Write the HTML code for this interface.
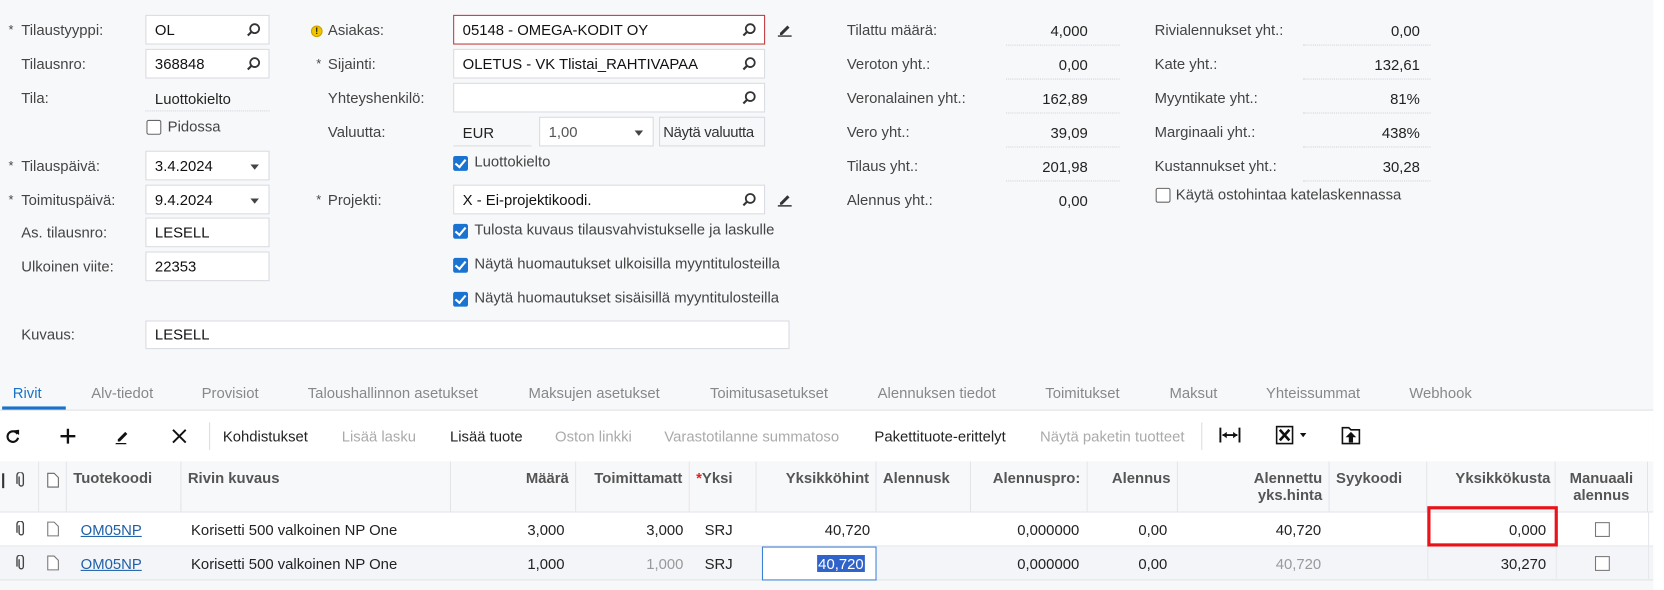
<!DOCTYPE html>
<html><head><meta charset="utf-8"><style>
*{box-sizing:border-box;margin:0;padding:0}
html,body{width:1664px;height:590px;overflow:hidden;background:#fff}
body{font-family:"Liberation Sans",Arial,sans-serif;font-size:14px;color:#222}
#w{position:absolute;left:0;top:0;width:1568px;height:556px;transform:scale(1.0612);transform-origin:0 0;background:#f7f8fa}
.a{position:absolute;white-space:nowrap}
.lbl{color:#444}
.st{color:#444;font-size:12px}
.in{position:absolute;height:28px;background:#fff;border:1px solid #d8dbe0;padding:0 8px;line-height:26px;color:#111}
.srch{position:absolute;right:7px;top:6px;width:14px;height:14px}
.dd{position:absolute;right:9px;top:12px;border-left:4px solid transparent;border-right:4px solid transparent;border-top:5px solid #444}
.cb{position:absolute;width:14px;height:14px;border-radius:2px;background:#1a73d0}
.cb:after{content:"";position:absolute;left:4px;top:1px;width:4px;height:8px;border:solid #fff;border-width:0 2px 2px 0;transform:rotate(40deg)}
.ucb{position:absolute;width:14px;height:14px;border:1px solid #666;border-radius:2px;background:#fff}
.ul{position:absolute;height:1px;border-bottom:1px dotted #d0d3d8}
.val{text-align:right}
.tab{position:absolute;top:362px;color:#888}
.tb{position:absolute;top:403px}
.g{color:#aaa}
.hd{position:absolute;top:435px;height:48px;border-right:1px solid #e2e4e8;border-bottom:1px solid #e2e4e8;background:#f7f8fa;padding:7px 6px;color:#555;font-weight:bold;line-height:16px}
.r{text-align:right}
.cell{position:absolute;height:16px;line-height:16px}
</style></head><body><div id="w">
<div class="a st" style="left:8px;top:21px">*</div><div class="a lbl" style="left:20px;top:20px">Tilaustyyppi:</div>
<div class="in" style="left:137px;top:14px;width:117px">OL<svg class="srch" viewBox="0 0 14 14"><circle cx="8" cy="6" r="4.2" fill="none" stroke="#333" stroke-width="1.7"/><path d="M5 9L1.5 12.5" stroke="#333" stroke-width="2"/></svg></div>
<div class="a lbl" style="left:20px;top:52px">Tilausnro:</div>
<div class="in" style="left:137px;top:46px;width:117px">368848<svg class="srch" viewBox="0 0 14 14"><circle cx="8" cy="6" r="4.2" fill="none" stroke="#333" stroke-width="1.7"/><path d="M5 9L1.5 12.5" stroke="#333" stroke-width="2"/></svg></div>
<div class="a lbl" style="left:20px;top:84px">Tila:</div>
<div class="a" style="left:146px;top:85px">Luottokielto</div><div class="ul" style="left:137px;top:104px;width:117px"></div>
<div class="ucb" style="left:138px;top:113px"></div><div class="a lbl" style="left:158px;top:111px">Pidossa</div>
<div class="a st" style="left:8px;top:149px">*</div><div class="a lbl" style="left:20px;top:148px">Tilauspäivä:</div>
<div class="in" style="left:137px;top:142px;width:117px">3.4.2024<span class="dd"></span></div>
<div class="a st" style="left:8px;top:181px">*</div><div class="a lbl" style="left:20px;top:180px">Toimituspäivä:</div>
<div class="in" style="left:137px;top:174px;width:117px">9.4.2024<span class="dd"></span></div>
<div class="a lbl" style="left:20px;top:211px">As. tilausnro:</div>
<div class="in" style="left:137px;top:205px;width:117px">LESELL</div>
<div class="a lbl" style="left:20px;top:243px">Ulkoinen viite:</div>
<div class="in" style="left:137px;top:237px;width:117px">22353</div>
<div class="a lbl" style="left:20px;top:307px">Kuvaus:</div>
<div class="in" style="left:137px;top:302px;width:607px;height:27px;line-height:25px">LESELL</div>
<div class="a" style="left:293px;top:24px;width:11px;height:11px;border-radius:50%;background:#f2c500;border:1px solid #c9a000;font-size:9px;font-weight:bold;text-align:center;line-height:9px">!</div>
<div class="a lbl" style="left:309px;top:20px">Asiakas:</div>
<div class="in" style="left:427px;top:14px;width:294px;border-color:#c0393b">05148 - OMEGA-KODIT OY<svg class="srch" viewBox="0 0 14 14"><circle cx="8" cy="6" r="4.2" fill="none" stroke="#333" stroke-width="1.7"/><path d="M5 9L1.5 12.5" stroke="#333" stroke-width="2"/></svg></div>
<svg class="a" style="left:732px;top:21px" width="15" height="14" viewBox="0 0 15 14"><path d="M3 10L10 3l2 2-7 7H3z" fill="#333"/><path d="M1 13h13" stroke="#333" stroke-width="1.3"/></svg>
<div class="a st" style="left:298px;top:53px">*</div><div class="a lbl" style="left:309px;top:52px">Sijainti:</div>
<div class="in" style="left:427px;top:46px;width:294px">OLETUS - VK Tlistai_RAHTIVAPAA<svg class="srch" viewBox="0 0 14 14"><circle cx="8" cy="6" r="4.2" fill="none" stroke="#333" stroke-width="1.7"/><path d="M5 9L1.5 12.5" stroke="#333" stroke-width="2"/></svg></div>
<div class="a lbl" style="left:309px;top:84px">Yhteyshenkilö:</div>
<div class="in" style="left:427px;top:78px;width:294px"><svg class="srch" viewBox="0 0 14 14"><circle cx="8" cy="6" r="4.2" fill="none" stroke="#333" stroke-width="1.7"/><path d="M5 9L1.5 12.5" stroke="#333" stroke-width="2"/></svg></div>
<div class="a lbl" style="left:309px;top:116px">Valuutta:</div>
<div class="a" style="left:436px;top:117px">EUR</div><div class="ul" style="left:427px;top:137px;width:74px;border-bottom:1px solid #ddd"></div>
<div class="in" style="left:508px;top:110px;width:108px;color:#555">1,00<span class="dd"></span></div>
<div class="in" style="left:621px;top:110px;width:100px;padding:0 3px;color:#333;background:#f7f8fa;letter-spacing:-0.3px">Näytä valuutta</div>
<div class="cb" style="left:427px;top:147px"></div><div class="a lbl" style="left:447px;top:144px">Luottokielto</div>
<div class="a st" style="left:298px;top:181px">*</div><div class="a lbl" style="left:309px;top:180px">Projekti:</div>
<div class="in" style="left:427px;top:174px;width:294px">X - Ei-projektikoodi.<svg class="srch" viewBox="0 0 14 14"><circle cx="8" cy="6" r="4.2" fill="none" stroke="#333" stroke-width="1.7"/><path d="M5 9L1.5 12.5" stroke="#333" stroke-width="2"/></svg></div>
<svg class="a" style="left:732px;top:181px" width="15" height="14" viewBox="0 0 15 14"><path d="M3 10L10 3l2 2-7 7H3z" fill="#333"/><path d="M1 13h13" stroke="#333" stroke-width="1.3"/></svg>
<div class="cb" style="left:427px;top:211px"></div><div class="a lbl" style="left:447px;top:208px">Tulosta kuvaus tilausvahvistukselle ja laskulle</div>
<div class="cb" style="left:427px;top:243px"></div><div class="a lbl" style="left:447px;top:240px">Näytä huomautukset ulkoisilla myyntitulosteilla</div>
<div class="cb" style="left:427px;top:275px"></div><div class="a lbl" style="left:447px;top:272px">Näytä huomautukset sisäisillä myyntitulosteilla</div>
<div class="a lbl" style="left:798px;top:20px">Tilattu määrä:</div><div class="a val" style="left:948px;width:77px;top:21px">4,000</div><div class="ul" style="left:948px;top:42px;width:107px"></div>
<div class="a lbl" style="left:798px;top:52px">Veroton yht.:</div><div class="a val" style="left:948px;width:77px;top:53px">0,00</div><div class="ul" style="left:948px;top:74px;width:107px"></div>
<div class="a lbl" style="left:798px;top:84px">Veronalainen yht.:</div><div class="a val" style="left:948px;width:77px;top:85px">162,89</div><div class="ul" style="left:948px;top:106px;width:107px"></div>
<div class="a lbl" style="left:798px;top:116px">Vero yht.:</div><div class="a val" style="left:948px;width:77px;top:117px">39,09</div><div class="ul" style="left:948px;top:138px;width:107px"></div>
<div class="a lbl" style="left:798px;top:148px">Tilaus yht.:</div><div class="a val" style="left:948px;width:77px;top:149px">201,98</div><div class="ul" style="left:948px;top:170px;width:107px"></div>
<div class="a lbl" style="left:798px;top:180px">Alennus yht.:</div><div class="a val" style="left:948px;width:77px;top:181px">0,00</div>
<div class="a lbl" style="left:1088px;top:20px">Rivialennukset yht.:</div><div class="a val" style="left:1228px;width:110px;top:21px">0,00</div><div class="ul" style="left:1228px;top:42px;width:120px"></div>
<div class="a lbl" style="left:1088px;top:52px">Kate yht.:</div><div class="a val" style="left:1228px;width:110px;top:53px">132,61</div><div class="ul" style="left:1228px;top:74px;width:120px"></div>
<div class="a lbl" style="left:1088px;top:84px">Myyntikate yht.:</div><div class="a val" style="left:1228px;width:110px;top:85px">81%</div><div class="ul" style="left:1228px;top:106px;width:120px"></div>
<div class="a lbl" style="left:1088px;top:116px">Marginaali yht.:</div><div class="a val" style="left:1228px;width:110px;top:117px">438%</div><div class="ul" style="left:1228px;top:138px;width:120px"></div>
<div class="a lbl" style="left:1088px;top:148px">Kustannukset yht.:</div><div class="a val" style="left:1228px;width:110px;top:149px">30,28</div><div class="ul" style="left:1228px;top:170px;width:120px"></div>
<div class="ucb" style="left:1089px;top:177px"></div><div class="a lbl" style="left:1108px;top:175px">Käytä ostohintaa katelaskennassa</div>
<div class="tab" style="left:12px;color:#1a73c8">Rivit</div>
<div class="tab" style="left:86px">Alv-tiedot</div>
<div class="tab" style="left:190px">Provisiot</div>
<div class="tab" style="left:290px">Taloushallinnon asetukset</div>
<div class="tab" style="left:498px">Maksujen asetukset</div>
<div class="tab" style="left:669px">Toimitusasetukset</div>
<div class="tab" style="left:827px">Alennuksen tiedot</div>
<div class="tab" style="left:985px">Toimitukset</div>
<div class="tab" style="left:1102px">Maksut</div>
<div class="tab" style="left:1193px">Yhteissummat</div>
<div class="tab" style="left:1328px">Webhook</div>
<div class="a" style="left:0;top:386px;width:1558px;height:1px;background:#dcdfe3"></div>
<div class="a" style="left:2px;top:383px;width:60px;height:3px;background:#1a73c8"></div>
<div class="a" style="left:0;top:387px;width:1558px;height:48px;background:#fff"></div>
<svg class="a" style="left:4px;top:403px" width="16" height="16" viewBox="0 0 16 16"><path d="M12.5 6A5 5 0 1 0 13 9.5" fill="none" stroke="#111" stroke-width="2"/><path d="M9 2.5L14 2v5z" fill="#111"/></svg>
<svg class="a" style="left:56px;top:403px" width="16" height="16" viewBox="0 0 16 16"><path d="M8 1v14M1 8h14" stroke="#111" stroke-width="2.2"/></svg>
<svg class="a" style="left:108px;top:403px" width="16" height="16" viewBox="0 0 16 16"><path d="M3 11L10 4l2 2-7 7H3z" fill="#111"/><path d="M1 15h10" stroke="#111" stroke-width="1.2"/></svg>
<svg class="a" style="left:161px;top:403px" width="16" height="16" viewBox="0 0 16 16"><path d="M2 2l12 12M14 2L2 14" stroke="#111" stroke-width="1.8"/></svg>
<div class="a" style="left:197px;top:398px;width:1px;height:26px;background:#ddd"></div>
<div class="tb" style="left:210px">Kohdistukset</div>
<div class="tb g" style="left:322px">Lisää lasku</div>
<div class="tb" style="left:424px">Lisää tuote</div>
<div class="tb g" style="left:523px">Oston linkki</div>
<div class="tb g" style="left:626px">Varastotilanne summatoso</div>
<div class="tb" style="left:824px">Pakettituote-erittelyt</div>
<div class="tb g" style="left:980px">Näytä paketin tuotteet</div>
<div class="a" style="left:1132px;top:398px;width:1px;height:26px;background:#ddd"></div>
<svg class="a" style="left:1148px;top:402px" width="22" height="16" viewBox="0 0 22 16"><path d="M2 1v14M20 1v14M4 8h14" stroke="#111" stroke-width="1.8"/><path d="M4 8l4-3v6zM18 8l-4-3v6z" fill="#111"/></svg>
<svg class="a" style="left:1202px;top:401px" width="30" height="18" viewBox="0 0 30 18"><rect x="1" y="1" width="15" height="16" fill="#fff" stroke="#111" stroke-width="1.5"/><path d="M4 4l9 10M13 4l-9 10" stroke="#111" stroke-width="2.5"/><path d="M23 7h6l-3 4z" fill="#111"/></svg>
<svg class="a" style="left:1263px;top:400px" width="20" height="20" viewBox="0 0 20 20"><path d="M2 3h6l2 2h8v13H2z" fill="#fff" stroke="#111" stroke-width="1.5"/><path d="M10 7l-5 5h3v5h4v-5h3z" fill="#111"/></svg>
<div class="a" style="left:0;top:435px;width:1558px;height:48px;background:#f7f8fa;border-top:1px solid #e2e4e8"></div>
<div class="hd" style="left:0;width:8px"></div>
<div class="a" style="left:2px;top:446px;width:2px;height:14px;background:#333"></div>
<div class="hd" style="left:8px;width:29px"></div>
<svg class="a" style="left:15px;top:445px" width="10" height="15" viewBox="0 0 10 15"><path d="M3 4v7a2 2 0 0 0 4 0V3a3 3 0 0 0-6 0v8" fill="none" stroke="#444" stroke-width="1.3"/></svg>
<div class="hd" style="left:37px;width:26px"></div>
<svg class="a" style="left:44px;top:445px" width="12" height="15" viewBox="0 0 12 15"><path d="M1 1h6l4 4v9H1z" fill="#fff" stroke="#666"/></svg>
<div class="hd" style="left:63px;width:108px">Tuotekoodi</div>
<div class="hd" style="left:171px;width:254px">Rivin kuvaus</div>
<div class="hd r" style="left:425px;width:118px">Määrä</div>
<div class="hd r" style="left:543px;width:107px;overflow:hidden">Toimittamatt</div>
<div class="hd" style="left:650px;width:63px"><span style="color:#e02020">*</span>Yksi</div>
<div class="hd r" style="left:713px;width:113px;overflow:hidden">Yksikköhint</div>
<div class="hd" style="left:826px;width:89px;overflow:hidden">Alennusk</div>
<div class="hd r" style="left:915px;width:110px;overflow:hidden">Alennuspro:</div>
<div class="hd r" style="left:1025px;width:85px">Alennus</div>
<div class="hd r" style="left:1110px;width:143px">Alennettu<br>yks.hinta</div>
<div class="hd" style="left:1253px;width:92px">Syykoodi</div>
<div class="hd r" style="left:1345px;width:121px;overflow:hidden;padding-right:4px">Yksikkökusta</div>
<div class="hd" style="left:1466px;width:87px;text-align:center">Manuaali<br>alennus</div>
<div class="hd" style="left:1553px;width:5px"></div>
<div class="a" style="left:0;top:483px;width:1558px;height:32px;background:#fff;border-bottom:1px solid #e6e8eb"></div>
<div class="a" style="left:0;top:515px;width:1558px;height:32px;background:#f3f5f9;border-bottom:1px solid #e0e2e6"></div>
<div class="a" style="left:1345px;top:483px;width:1px;height:64px;background:#e6e8eb"></div>
<div class="a" style="left:1466px;top:483px;width:1px;height:64px;background:#e6e8eb"></div>
<div class="a" style="left:1553px;top:483px;width:1px;height:64px;background:#e6e8eb"></div>
<svg class="a" style="left:15px;top:491px" width="10" height="15" viewBox="0 0 10 15"><path d="M3 4v7a2 2 0 0 0 4 0V3a3 3 0 0 0-6 0v8" fill="none" stroke="#444" stroke-width="1.3"/></svg>
<svg class="a" style="left:44px;top:491px" width="12" height="15" viewBox="0 0 12 15"><path d="M1 1h6l4 4v9H1z" fill="#fff" stroke="#777"/></svg>
<svg class="a" style="left:15px;top:523px" width="10" height="15" viewBox="0 0 10 15"><path d="M3 4v7a2 2 0 0 0 4 0V3a3 3 0 0 0-6 0v8" fill="none" stroke="#444" stroke-width="1.3"/></svg>
<svg class="a" style="left:44px;top:523px" width="12" height="15" viewBox="0 0 12 15"><path d="M1 1h6l4 4v9H1z" fill="#fff" stroke="#777"/></svg>
<div class="cell" style="left:76px;top:491px;color:#1f5fa8;text-decoration:underline">OM05NP</div>
<div class="cell" style="left:180px;top:491px">Korisetti 500 valkoinen NP One</div>
<div class="cell r" style="left:425px;width:107px;top:491px">3,000</div>
<div class="cell r" style="left:543px;width:101px;top:491px">3,000</div>
<div class="cell" style="left:664px;top:491px">SRJ</div>
<div class="cell r" style="left:713px;width:107px;top:491px">40,720</div>
<div class="cell r" style="left:915px;width:102px;top:491px">0,000000</div>
<div class="cell r" style="left:1025px;width:75px;top:491px">0,00</div>
<div class="cell r" style="left:1110px;width:135px;top:491px">40,720</div>
<div class="a" style="left:1345px;top:477px;width:123px;height:38px;border:3px solid #e8141a"></div>
<div class="cell r" style="left:1345px;width:112px;top:491px">0,000</div>
<div class="ucb" style="left:1503px;top:492px;border-color:#777;border-radius:0"></div>
<div class="cell" style="left:76px;top:523px;color:#1f5fa8;text-decoration:underline">OM05NP</div>
<div class="cell" style="left:180px;top:523px">Korisetti 500 valkoinen NP One</div>
<div class="cell r" style="left:425px;width:107px;top:523px">1,000</div>
<div class="cell r" style="left:543px;width:101px;top:523px;color:#999">1,000</div>
<div class="cell" style="left:664px;top:523px">SRJ</div>
<div class="a" style="left:718px;top:515px;width:108px;height:32px;background:#fff;border:1px solid #3b82d6"></div>
<div class="cell" style="left:770px;top:523px;background:#2f63c9;color:#fff;padding:0 1px">40,720</div>
<div class="cell r" style="left:915px;width:102px;top:523px">0,000000</div>
<div class="cell r" style="left:1025px;width:75px;top:523px">0,00</div>
<div class="cell r" style="left:1110px;width:135px;top:523px;color:#999">40,720</div>
<div class="cell r" style="left:1345px;width:112px;top:523px">30,270</div>
<div class="ucb" style="left:1503px;top:524px;border-color:#777;border-radius:0"></div>
<div class="a" style="left:1558px;top:0;width:10px;height:556px;background:#fff"></div>
</div></body></html>
